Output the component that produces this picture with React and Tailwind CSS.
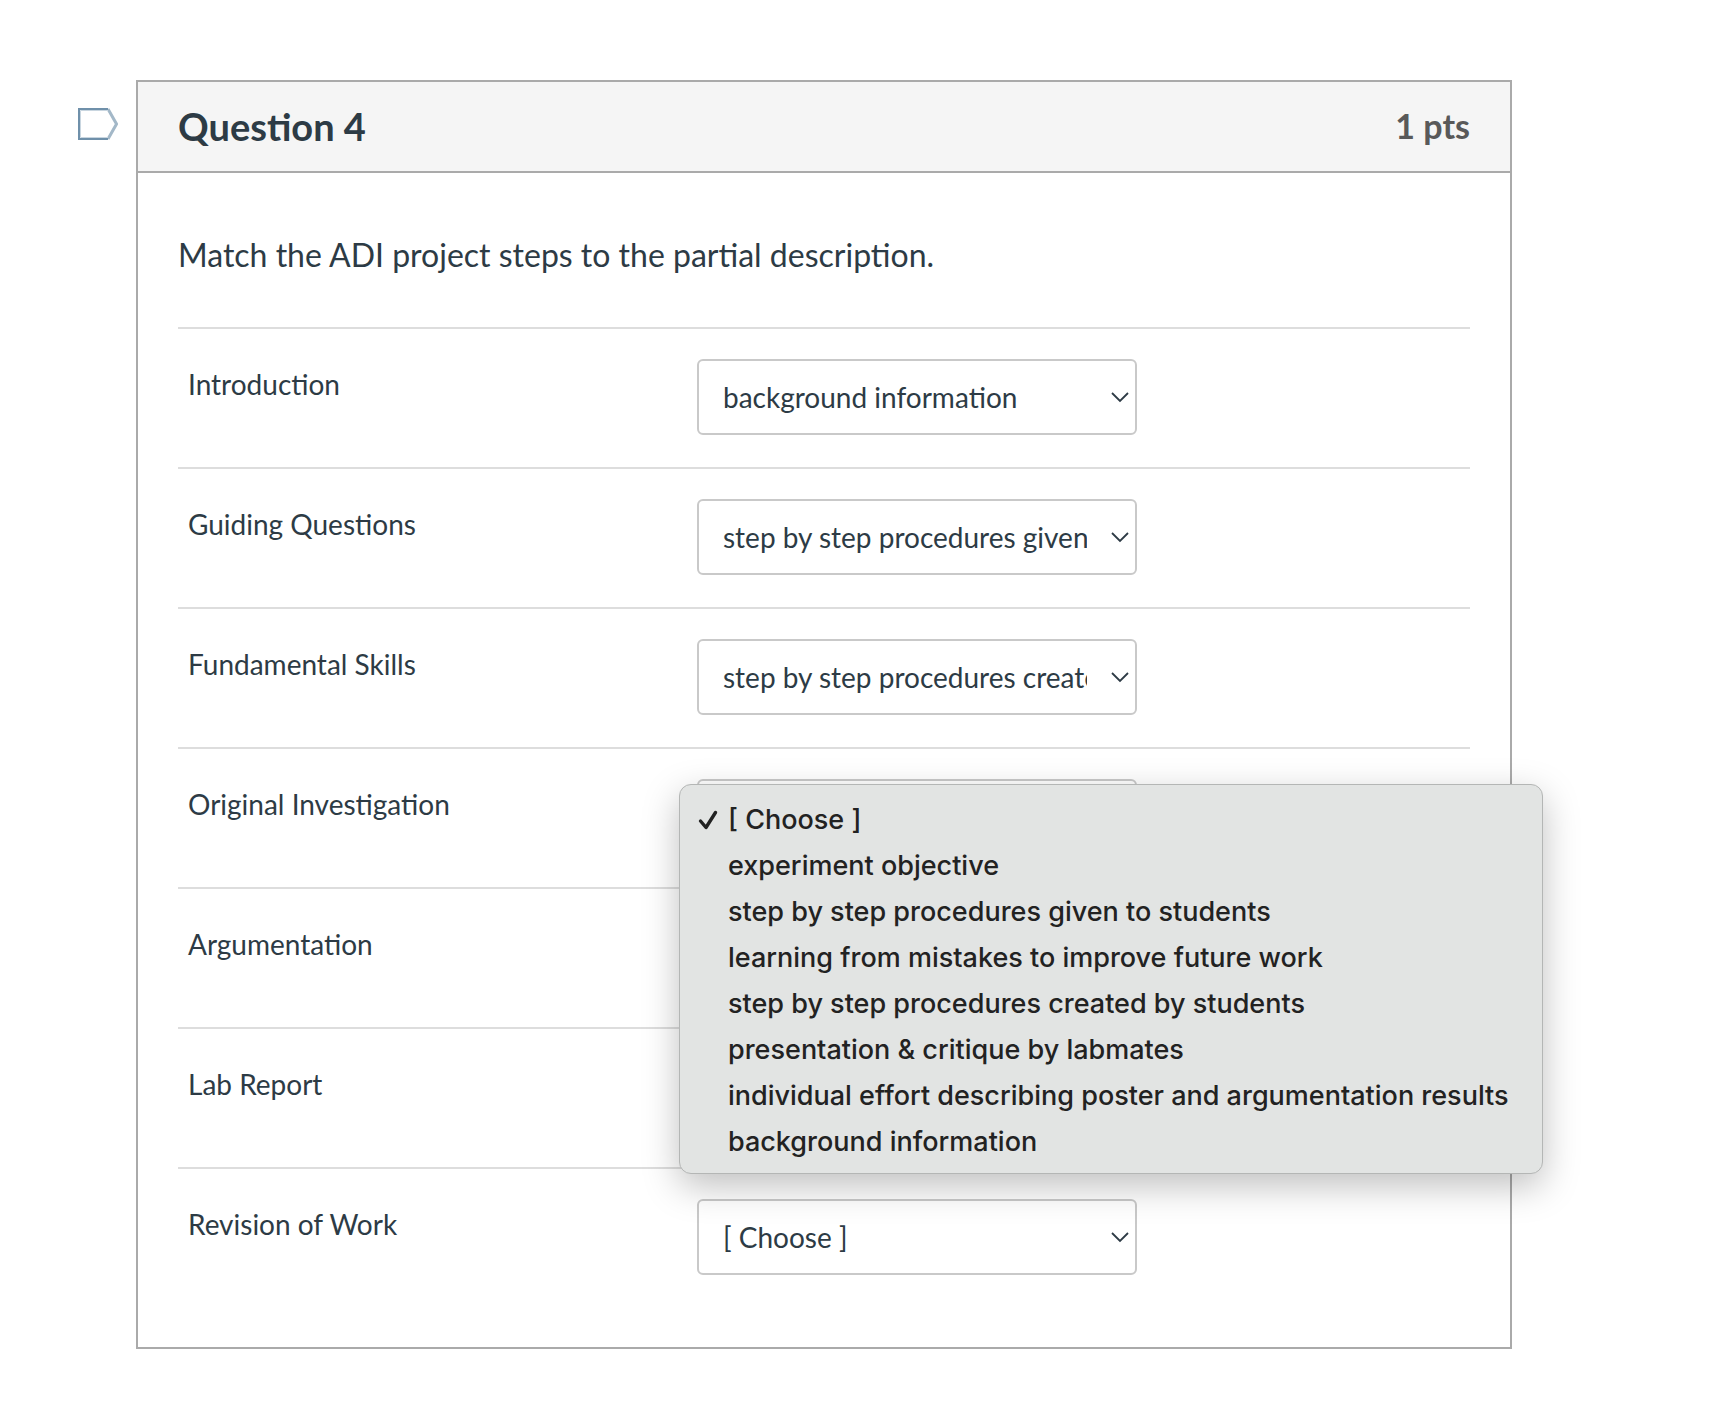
import React, { useState } from "react";

const CHOICES = [
  "[ Choose ]",
  "experiment objective",
  "step by step procedures given to students",
  "learning from mistakes to improve future work",
  "step by step procedures created by students",
  "presentation & critique by labmates",
  "individual effort describing poster and argumentation results",
  "background information",
];

const STEPS = [
  { id: "introduction", label: "Introduction", answer: 7 },
  { id: "guiding-questions", label: "Guiding Questions", answer: 2 },
  { id: "fundamental-skills", label: "Fundamental Skills", answer: 4 },
  { id: "original-investigation", label: "Original Investigation", answer: 0 },
  { id: "argumentation", label: "Argumentation", answer: 0 },
  { id: "lab-report", label: "Lab Report", answer: 0 },
  { id: "revision", label: "Revision of Work", answer: 0 },
];

const FlagButton = () => (
  <button type="button" aria-label="Flag question" className="mt-7 h-8 w-10 shrink-0">
    <svg viewBox="0 0 40 32" fill="none" className="h-8 w-10">
      <path d="M30 1 L38.5 16 L30 31" stroke="#a3b8c8" strokeWidth="3" />
      <path d="M30 1 H1 V31 H30" stroke="#6f90aa" strokeWidth="2" />
      <path d="M30 2.5 H2.5 V29.5 H30" stroke="#c9d6e0" strokeWidth="1" />
    </svg>
  </button>
);

const Chevron = () => (
  <svg
    viewBox="0 0 18 12"
    fill="none"
    className="pointer-events-none absolute top-[33px] right-2 h-3 w-[18px]"
  >
    <path d="M1 1 L9 9 L17 1" stroke="#2d3b45" strokeWidth="1.8" />
  </svg>
);

const CheckMark = () => (
  <svg viewBox="0 0 20 20" fill="none" className="h-5 w-5">
    <path
      d="M2.5 11 L8 17.5 L17.5 2.5"
      stroke="#222"
      strokeWidth="3.4"
      strokeLinecap="round"
      strokeLinejoin="round"
    />
  </svg>
);

// Open option list, floats over the rows below its select
const OptionMenu = ({ selected, onPick }) => (
  <ul
    role="listbox"
    aria-label="Answer choices"
    className="absolute top-[5px] -left-[18px] z-10 w-[864px] rounded-xl border border-[#b4b6b5] bg-[#e2e4e3] pt-3 pb-2 pl-[18px] font-[Inter,sans-serif] text-[27px] leading-[46px] font-[450] whitespace-nowrap text-[#222] shadow-[0_12px_36px_rgba(0,0,0,0.25)]"
  >
    {CHOICES.map((choice, index) => (
      <li
        key={choice}
        role="option"
        aria-selected={index === selected}
        onClick={() => onPick(index)}
        className="flex cursor-default items-center"
      >
        <span className="w-[30px] shrink-0">{index === selected && <CheckMark />}</span>
        {choice}
      </li>
    ))}
  </ul>
);

const App = () => {
  const [answers, setAnswers] = useState(STEPS.map((step) => step.answer));
  const [openRow, setOpenRow] = useState(3);

  const setAnswer = (row, value) => {
    setAnswers(answers.map((answer, i) => (i === row ? value : answer)));
    setOpenRow(null);
  };

  return (
    <main className="flex min-h-screen items-start gap-[18px] bg-white pt-20 pr-[221px] pb-[68px] pl-[78px] font-[Lato,sans-serif] text-[#2d3b45]">
      <FlagButton />

      <section className="min-w-0 flex-1 border-2 border-[#aaa]">
        {/* Header */}
        <header className="flex items-center justify-between border-b-2 border-[#aaa] bg-[#f5f5f5] px-10 pt-5 pb-[21px]">
          <h1 className="text-[38px] leading-[48px] font-bold">Question 4</h1>
          <span className="text-[34px] leading-[48px] font-bold text-[#595959]">1 pts</span>
        </header>

        <div className="px-10 pt-[58px] pb-10">
          <p className="mb-12 text-[32px] leading-[48px]">
            Match the ADI project steps to the partial description.
          </p>

          {/* Matching rows */}
          {STEPS.map((step, row) => (
            <div key={step.id} className="flex items-start border-t-2 border-[#ddd] pt-[30px] pb-8">
              <label
                htmlFor={step.id}
                className="w-[519px] shrink-0 pt-1 pl-[10px] text-[28px] leading-[42px]"
              >
                {step.label}
              </label>
              <div className="relative w-[440px]">
                <select
                  id={step.id}
                  value={answers[row]}
                  onChange={(e) => setAnswer(row, Number(e.target.value))}
                  className="block h-[76px] w-full appearance-none rounded-md border-2 border-[#c9c9c9] bg-white pr-12 pl-6 text-[28px]"
                >
                  {CHOICES.map((choice, index) => (
                    <option key={choice} value={index}>
                      {choice}
                    </option>
                  ))}
                </select>
                <Chevron />
                {openRow === row && (
                  <OptionMenu
                    selected={answers[row]}
                    onPick={(index) => setAnswer(row, index)}
                  />
                )}
              </div>
            </div>
          ))}
        </div>
      </section>
    </main>
  );
};

export default App;
